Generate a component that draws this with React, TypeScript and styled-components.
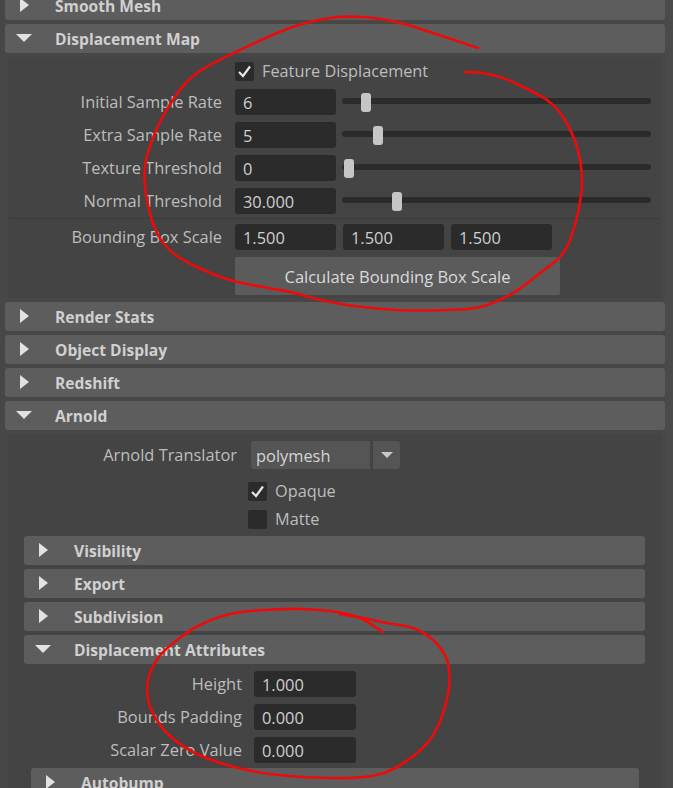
import * as React from 'react';
import styled, { createGlobalStyle } from 'styled-components';

const GlobalStyle = createGlobalStyle`
  html, body {
    margin: 0;
    padding: 0;
    background: #474747;
  }
  body {
    font-family: "Open Sans", "Noto Sans", sans-serif;
  }
`;

const Page = styled.div`
  position: relative;
  width: 673px;
  height: 788px;
  overflow: hidden;
  display: flex;
  background: #474747;
`;

const Column = styled.div`
  flex: 1;
  display: flex;
  flex-direction: column;
  gap: 4px;
  padding-left: 5px;
  margin-top: -9px;
`;

const Gutter = styled.div`
  width: 8px;
  flex-shrink: 0;
  background: #4a4a4a;
`;

const HeaderBar = styled.div`
  display: flex;
  align-items: center;
  flex-shrink: 0;
  height: 29px;
  background: #5d5d5d;
  border-radius: 3px;
  color: #d0d0d0;
  font-size: 15.6px;
  font-weight: 700;
  white-space: nowrap;
`;

const ArrowSlot = styled.div<{ $open: boolean }>`
  width: 50px;
  flex-shrink: 0;
  display: flex;
  align-items: center;
  padding-left: ${(p) => (p.$open ? 11 : 15)}px;
  box-sizing: border-box;
`;

const ArrowRight = styled.span`
  width: 0;
  height: 0;
  border-left: 9px solid #e2e2e2;
  border-top: 7.5px solid transparent;
  border-bottom: 7.5px solid transparent;
  margin-top: -2px;
`;

const ArrowDown = styled.span`
  width: 0;
  height: 0;
  border-top: 8px solid #e2e2e2;
  border-left: 8px solid transparent;
  border-right: 8px solid transparent;
  margin-top: -1px;
`;

const Body = styled.div<{ $pad: string }>`
  margin: 0 3px;
  padding: ${(p) => p.$pad};
  background: #444444;
  display: flex;
  flex-direction: column;
`;

const Nested = styled.div<{ $margin: string }>`
  display: flex;
  flex-direction: column;
  gap: 4px;
  margin: ${(p) => p.$margin};
`;

const Row = styled.div<{ $label: number; $gap: number; $top?: number; $height?: number }>`
  display: grid;
  grid-template-columns: ${(p) => p.$label}px 1fr;
  grid-template-rows: ${(p) => p.$height ?? 26}px;
  column-gap: ${(p) => p.$gap}px;
  align-items: center;
  height: ${(p) => p.$height ?? 26}px;
  margin-top: ${(p) => p.$top ?? 0}px;
`;

const Label = styled.div`
  text-align: right;
  color: #bdbdbd;
  font-size: 16.4px;
  line-height: 20px;
  white-space: nowrap;
`;

const Controls = styled.div<{ $gap?: number }>`
  display: flex;
  align-items: center;
  gap: ${(p) => p.$gap ?? 0}px;
  min-width: 0;
`;

const Field = styled.div<{ $w?: number }>`
  width: ${(p) => p.$w ?? 101}px;
  height: 26px;
  box-sizing: border-box;
  flex-shrink: 0;
  padding-left: 8px;
  background: #2b2b2b;
  border-radius: 3px;
  color: #cfcfcf;
  font-size: 16.4px;
  line-height: 27px;
`;

const Track = styled.div`
  position: relative;
  flex: 1;
  height: 6px;
  margin: -2px 11px 0 6px;
  background: #2b2b2b;
  border-radius: 3px;
`;

const Handle = styled.div`
  position: absolute;
  top: 50%;
  width: 10px;
  height: 19px;
  margin-top: -8px;
  background: #c6c6c6;
  border-radius: 3px;
`;

const CheckWrap = styled.div<{ $shift?: number }>`
  display: flex;
  align-items: center;
  gap: 8px;
  margin-left: ${(p) => p.$shift ?? 0}px;
  color: #bdbdbd;
  font-size: 16.3px;
  line-height: 19px;
  white-space: nowrap;
`;

const Box = styled.div`
  width: 19px;
  height: 19px;
  flex-shrink: 0;
  background: #2b2b2b;
  border-radius: 2px;
  display: flex;
  align-items: center;
  justify-content: center;
`;

const Separator = styled.div`
  height: 1px;
  margin: 4px 2px 5px;
  background: #3b3b3b;
`;

const Button = styled.div`
  width: 325px;
  height: 38px;
  display: flex;
  align-items: center;
  justify-content: center;
  background: #5b5b5b;
  border-radius: 2px;
  color: #dadada;
  font-size: 16.5px;
`;

const Dropdown = styled.div`
  display: flex;
  gap: 3px;
  height: 28px;
`;

const DropdownValue = styled.div`
  width: 119px;
  box-sizing: border-box;
  padding-left: 5px;
  background: #555555;
  border-radius: 3px 0 0 3px;
  color: #d4d4d4;
  font-size: 16.4px;
  line-height: 29px;
`;

const DropdownButton = styled.div`
  width: 27px;
  display: flex;
  align-items: center;
  justify-content: center;
  background: #555555;
  border-radius: 0 3px 3px 0;
`;

const DropdownArrow = styled.span`
  width: 0;
  height: 0;
  border-top: 6px solid #c8c8c8;
  border-left: 6.5px solid transparent;
  border-right: 6.5px solid transparent;
`;

const Ink = styled.svg`
  position: absolute;
  left: 0;
  top: 0;
  pointer-events: none;
`;

const Header = ({ title, open = false }: { title: string; open?: boolean }) => (
  <HeaderBar>
    <ArrowSlot $open={open}>{open ? <ArrowDown /> : <ArrowRight />}</ArrowSlot>
    {title}
  </HeaderBar>
);

const Check = ({ checked, label, shift }: { checked: boolean; label: string; shift?: number }) => (
  <CheckWrap $shift={shift}>
    <Box>
      {checked && (
        <svg width="19" height="19" viewBox="0 0 19 19">
          <path d="M4 10 L8 14 L15 4.5" fill="none" stroke="#e6e6e6" strokeWidth="2.2" />
        </svg>
      )}
    </Box>
    {label}
  </CheckWrap>
);

const sliders = [
  { label: 'Initial Sample Rate', value: '6', pos: 0.064 },
  { label: 'Extra Sample Rate', value: '5', pos: 0.104 },
  { label: 'Texture Threshold', value: '0', pos: 0.007 },
  { label: 'Normal Threshold', value: '30.000', pos: 0.167 },
];

const displacementAttrs = [
  { label: 'Height', value: '1.000' },
  { label: 'Bounds Padding', value: '0.000' },
  { label: 'Scalar Zero Value', value: '0.000' },
];

// catmull-rom through the sampled pen points
const smoothPath = (pts: number[][]) => {
  let d = `M${pts[0][0]},${pts[0][1]}`;
  for (let i = 0; i < pts.length - 1; i++) {
    const p0 = pts[i - 1] || pts[i];
    const p1 = pts[i];
    const p2 = pts[i + 1];
    const p3 = pts[i + 2] || p2;
    const c1x = p1[0] + (p2[0] - p0[0]) / 6;
    const c1y = p1[1] + (p2[1] - p0[1]) / 6;
    const c2x = p2[0] - (p3[0] - p1[0]) / 6;
    const c2y = p2[1] - (p3[1] - p1[1]) / 6;
    d += ` C${c1x.toFixed(1)},${c1y.toFixed(1)} ${c2x.toFixed(1)},${c2y.toFixed(1)} ${p2[0]},${p2[1]}`;
  }
  return d;
};

const topLoop = [
  [478, 48], [463, 43], [430, 32], [397, 22], [363, 17], [330, 18], [290, 28], [240, 50],
  [197, 73], [173, 100], [155, 133], [145, 167], [147, 200], [157, 233], [173, 253],
  [197, 267], [230, 280], [263, 287], [290, 292], [313, 298], [347, 305], [397, 310],
  [447, 310], [480, 307], [513, 293], [540, 273], [560, 257], [570, 240], [578, 213],
  [582, 180], [577, 147], [563, 117], [547, 100], [523, 87], [503, 78], [483, 73], [465, 72],
];

const bottomLoop = [
  [340, 614], [363, 618], [387, 623], [413, 628], [433, 640], [447, 660], [449, 687],
  [443, 713], [432, 737], [417, 753], [397, 767], [377, 775], [347, 778], [303, 777],
  [263, 773], [227, 765], [193, 752], [167, 733], [150, 707], [148, 680], [158, 658],
  [177, 640], [200, 625], [230, 614], [263, 610], [303, 609], [337, 612], [360, 618], [383, 632],
];

export default function App() {
  return (
    <>
      <GlobalStyle />
      <Page>
        <Column>
          <Header title="Smooth Mesh" />
          <Header title="Displacement Map" open />
          <Body $pad="5px 0 3px">
            <Row $label={214} $gap={13} $height={19}>
              <span />
              <Check checked label="Feature Displacement" />
            </Row>
            {sliders.map((s, i) => (
              <Row key={s.label} $label={214} $gap={13} $top={i === 0 ? 8 : 7}>
                <Label>{s.label}</Label>
                <Controls>
                  <Field>{s.value}</Field>
                  <Track>
                    <Handle style={{ left: `calc(${s.pos} * (100% - 10px))` }} />
                  </Track>
                </Controls>
              </Row>
            ))}
            <Separator />
            <Row $label={214} $gap={13}>
              <Label>Bounding Box Scale</Label>
              <Controls $gap={7}>
                <Field>1.500</Field>
                <Field>1.500</Field>
                <Field>1.500</Field>
              </Controls>
            </Row>
            <Row $label={214} $gap={13} $height={38} $top={7}>
              <span />
              <Button>Calculate Bounding Box Scale</Button>
            </Row>
          </Body>
          <Header title="Render Stats" />
          <Header title="Object Display" />
          <Header title="Redshift" />
          <Header title="Arnold" open />
          <Body $pad="7px 0 0">
            <Row $label={229} $gap={14} $height={28}>
              <Label>Arnold Translator</Label>
              <Dropdown>
                <DropdownValue>polymesh</DropdownValue>
                <DropdownButton>
                  <DropdownArrow />
                </DropdownButton>
              </Dropdown>
            </Row>
            <Row $label={229} $gap={14} $height={19} $top={13}>
              <span />
              <Check checked label="Opaque" shift={-3} />
            </Row>
            <Row $label={229} $gap={14} $height={19} $top={9}>
              <span />
              <Check checked={false} label="Matte" shift={-3} />
            </Row>
            <Nested $margin="7px 17px 0 16px">
              <Header title="Visibility" />
              <Header title="Export" />
              <Header title="Subdivision" />
              <Header title="Displacement Attributes" open />
              <Body $pad="3px 0 0">
                {displacementAttrs.map((a, i) => (
                  <Row key={a.label} $label={215} $gap={12} $top={i === 0 ? 0 : 7}>
                    <Label>{a.label}</Label>
                    <Controls>
                      <Field $w={102}>{a.value}</Field>
                    </Controls>
                  </Row>
                ))}
                <Nested $margin="5px 3px 0 4px">
                  <Header title="Autobump" />
                </Nested>
              </Body>
            </Nested>
          </Body>
        </Column>
        <Gutter />
        <Ink width="673" height="788" viewBox="0 0 673 788">
          <path d={smoothPath(topLoop)} fill="none" stroke="#ee0a0a" strokeWidth="2.6" strokeLinecap="round" strokeLinejoin="round" />
          <path d={smoothPath(bottomLoop)} fill="none" stroke="#ee0a0a" strokeWidth="2.6" strokeLinecap="round" strokeLinejoin="round" />
        </Ink>
      </Page>
    </>
  );
}
